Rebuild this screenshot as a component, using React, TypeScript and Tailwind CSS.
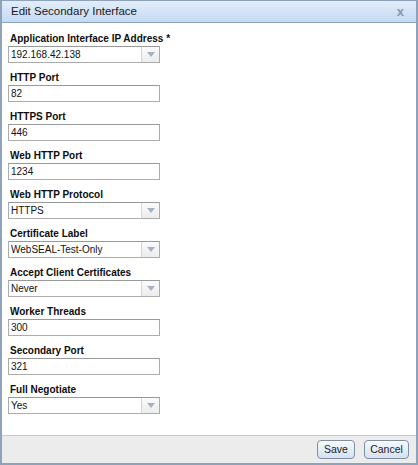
import React from 'react';

type Field = { label: string; value: string; select?: boolean };

const fields: Field[] = [
  { label: 'Application Interface IP Address *', value: '192.168.42.138', select: true },
  { label: 'HTTP Port', value: '82' },
  { label: 'HTTPS Port', value: '446' },
  { label: 'Web HTTP Port', value: '1234' },
  { label: 'Web HTTP Protocol', value: 'HTTPS', select: true },
  { label: 'Certificate Label', value: 'WebSEAL-Test-Only', select: true },
  { label: 'Accept Client Certificates', value: 'Never', select: true },
  { label: 'Worker Threads', value: '300' },
  { label: 'Secondary Port', value: '321' },
  { label: 'Full Negotiate', value: 'Yes', select: true },
];

export default function App() {
  return (
    <div
      className="w-[418px] h-[465px] flex flex-col bg-white border-2 border-t border-[#8ea3bb] text-[#111]"
      style={{ fontFamily: '"Liberation Sans", Arial, sans-serif' }}
    >
      {/* Title bar */}
      <div className="h-[22px] flex items-center justify-between pl-[9px] pr-[12px] bg-gradient-to-b from-[#e3edf9] to-[#c4daf4] border-b border-[#8ea3bb]">
        <span className="text-[11.5px] text-[#1a1a1a]">Edit Secondary Interface</span>
        <span className="text-[13px] font-bold text-[#8497ad] leading-none">x</span>
      </div>

      {/* Form */}
      <div className="flex-1 flex flex-col pt-[9px] px-[6px]">
        {fields.map((f) => (
          <div key={f.label} className="flex flex-col mb-[8px]">
            <label className="h-[14px] leading-[14px] text-[10px] font-bold text-[#0d0d0d] pl-[2px]">{f.label}</label>
            <FieldBox value={f.value} select={f.select} />
          </div>
        ))}
      </div>

      {/* Footer */}
      <div className="h-[28px] flex items-center justify-end gap-[9px] pr-[7px] bg-[#ececec] border-t border-[#c9c9c9]">
        <Button label="Save" width="w-[38px]" />
        <Button label="Cancel" width="w-[45px]" />
      </div>
    </div>
  );
}

const FieldBox = ({ value, select }: { value: string; select?: boolean }) => (
  <div className="w-[152px] h-[17px] flex border border-[#acacac] border-t-[#999] bg-white">
    <span className="flex-1 text-[10px] leading-[15px] pl-[2px] text-[#111]">{value}</span>
    {select && (
      <span className="w-[18px] h-full flex items-center justify-center border-l border-[#d6d6d6] bg-gradient-to-b from-[#fbfbfb] to-[#ececec]">
        <svg width="8" height="5" viewBox="0 0 8 5">
          <path d="M0 0 L8 0 L4 5 Z" fill="#a3b3c4" />
        </svg>
      </span>
    )}
  </div>
);

const Button = ({ label, width }: { label: string; width: string }) => (
  <button
    className={`${width} h-[19px] rounded-[4px] border border-[#7d8fa5] bg-gradient-to-b from-[#f5f9fd] to-[#d5e2ef] text-[10.5px] text-[#222] leading-none shadow-[inset_0_1px_0_#fff]`}
  >
    {label}
  </button>
);
